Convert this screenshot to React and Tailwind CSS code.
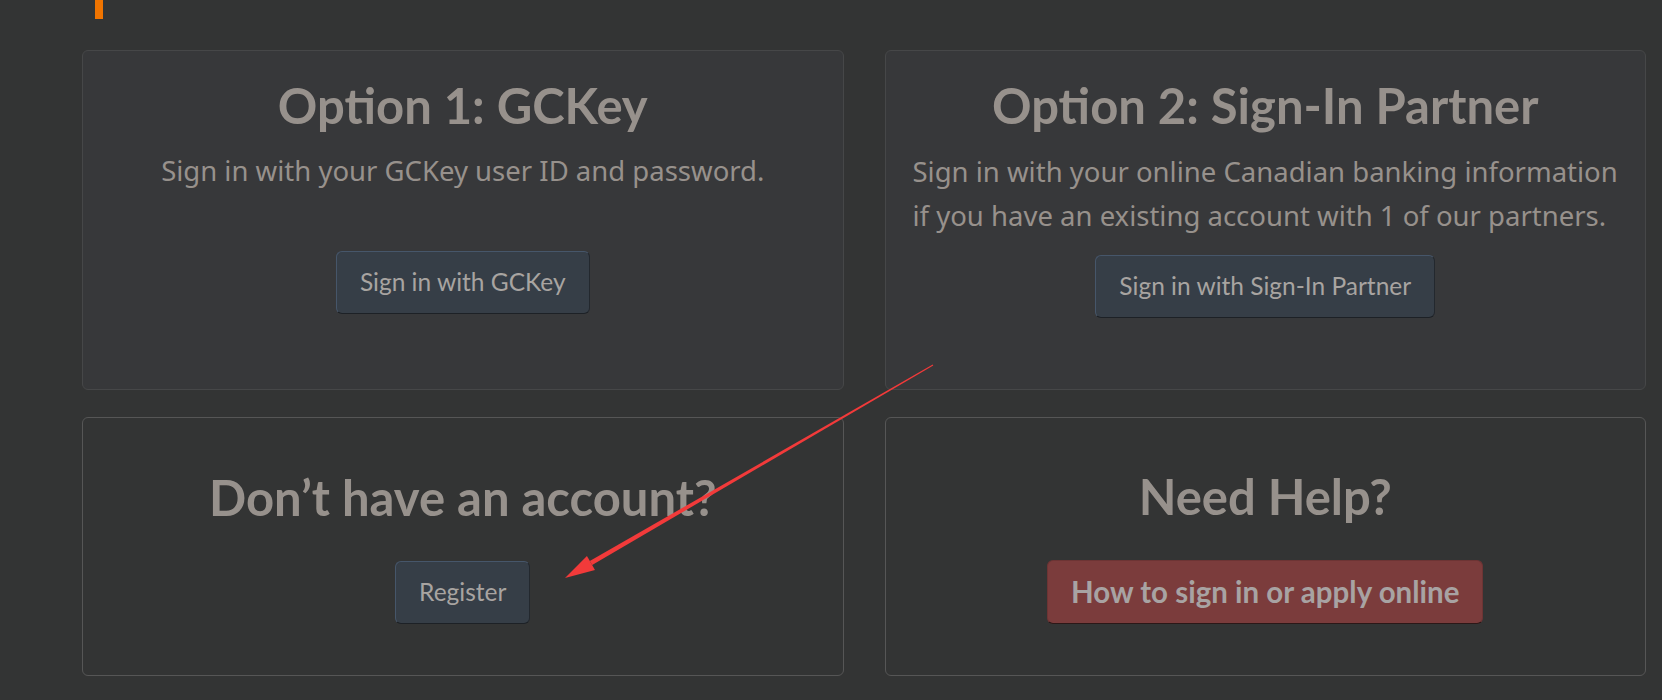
import React from "react";

const titleCls =
  "font-['Lato',sans-serif] font-bold text-[49px] leading-[60px] text-[#97918c] text-center";
const bodyCls =
  "font-['Noto_Sans',sans-serif] text-[27.5px] leading-[43.5px] text-[#97918c]";
const btnCls =
  "font-['Lato',sans-serif] text-[24.5px] leading-none text-[#a8a4a1] bg-[#363e47] border border-[#46566a] border-b-[#1d2126] border-r-[#23282e] rounded-[6px] h-[63px] px-[23px] flex items-center justify-center";

function Arrow() {
  const S = [933, 365];
  const T = [565, 578];
  const dx = T[0] - S[0];
  const dy = T[1] - S[1];
  const len = Math.hypot(dx, dy);
  const u = [dx / len, dy / len];
  const n = [-u[1], u[0]];
  const B = [T[0] - u[0] * 30, T[1] - u[1] * 30];
  const p = (pt, k, w) => `${pt[0] + n[0] * w * k},${pt[1] + n[1] * w * k}`;
  const shaft = [p(S, 1, 0.5), p(B, 1, 2.4), p(B, -1, 2.4), p(S, -1, 0.5)].join(" ");
  const head = [`${T[0]},${T[1]}`, p(B, 1, 8), p(B, -1, 8)].join(" ");
  return (
    <svg
      className="absolute left-0 top-0 pointer-events-none"
      width="1662"
      height="700"
      viewBox="0 0 1662 700"
    >
      <polygon points={shaft} fill="#f23a3a" />
      <polygon points={head} fill="#f23a3a" />
    </svg>
  );
}

export default function App() {
  return (
    <div className="relative w-[1662px] h-[700px] bg-[#333434] overflow-hidden">
      <div className="pl-[82px] pr-[16px]">
        <div className="ml-[13px] w-[8px] h-[19px] bg-[#f07400]" />
        <div className="mt-[31px] grid grid-cols-2 gap-x-[41px] gap-y-[27px]">
          {/* Card 1 */}
          <div className="bg-[#37383a] border border-[#464748] rounded-[6px] pt-[24px] pb-[71px] px-[20px] flex flex-col items-center">
            <h2 className={titleCls}>Option 1: GCKey</h2>
            <p className={bodyCls + " mt-[14px] text-center"}>
              Sign in with your GCKey user ID and password.
            </p>
            <button className={btnCls + " mt-[58px]"}>Sign in with GCKey</button>
          </div>
          {/* Card 2 */}
          <div className="bg-[#37383a] border border-[#464748] rounded-[6px] pt-[24px] pb-[71px] px-[20px] flex flex-col items-center">
            <h2 className={titleCls}>Option 2: Sign-In Partner</h2>
            <p className={bodyCls + " mt-[15px] ml-[7px] text-left"}>
              Sign in with your online Canadian banking information if you have an existing account with 1 of our partners.
            </p>
            <button className={btnCls + " mt-[18px]"}>Sign in with Sign-In Partner</button>
          </div>
          {/* Card 3 */}
          <div className="border border-[#565656] rounded-[6px] h-[259px] pb-[3px] flex flex-col items-center justify-center">
            <h2 className={titleCls}>Don’t have an account?</h2>
            <button className={btnCls + " mt-[34px]"}>Register</button>
          </div>
          {/* Card 4 */}
          <div className="border border-[#565656] rounded-[6px] h-[259px] pb-[3px] flex flex-col items-center justify-center">
            <h2 className={titleCls}>Need Help?</h2>
            <button className="mt-[34px] font-['Lato',sans-serif] font-bold text-[29.5px] leading-none text-[#a8a3a3] bg-[#7b3c3c] border border-[#6d3434] border-b-[#2c1818] rounded-[6px] h-[64px] px-[23px] flex items-center justify-center">
              How to sign in or apply online
            </button>
          </div>
        </div>
      </div>
      <Arrow />
    </div>
  );
}
